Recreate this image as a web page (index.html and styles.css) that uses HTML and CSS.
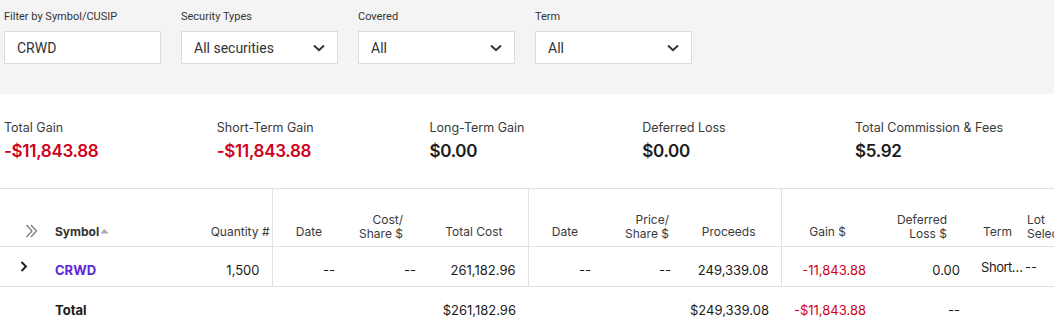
FILE: index.html
```html
<!DOCTYPE html>
<html>
<head>
<meta charset="utf-8">
<link rel="stylesheet" href="styles.css">
</head>
<body>
<div class="filters">
  <div class="filter">
    <div class="flabel">Filter by Symbol/CUSIP</div>
    <div class="fbox">CRWD</div>
  </div>
  <div class="filter">
    <div class="flabel">Security Types</div>
    <div class="fbox select">All securities<svg class="chev" width="12" height="8" viewBox="0 0 12 8"><path d="M1 1.5 L6 6.2 L11 1.5" fill="none" stroke="#333" stroke-width="2"/></svg></div>
  </div>
  <div class="filter">
    <div class="flabel">Covered</div>
    <div class="fbox select">All<svg class="chev" width="12" height="8" viewBox="0 0 12 8"><path d="M1 1.5 L6 6.2 L11 1.5" fill="none" stroke="#333" stroke-width="2"/></svg></div>
  </div>
  <div class="filter">
    <div class="flabel">Term</div>
    <div class="fbox select">All<svg class="chev" width="12" height="8" viewBox="0 0 12 8"><path d="M1 1.5 L6 6.2 L11 1.5" fill="none" stroke="#333" stroke-width="2"/></svg></div>
  </div>
</div>

<div class="summary">
  <div class="stat"><div class="slabel">Total Gain</div><div class="sval neg">-$11,843.88</div></div>
  <div class="stat"><div class="slabel">Short-Term Gain</div><div class="sval neg">-$11,843.88</div></div>
  <div class="stat"><div class="slabel">Long-Term Gain</div><div class="sval">$0.00</div></div>
  <div class="stat"><div class="slabel">Deferred Loss</div><div class="sval">$0.00</div></div>
  <div class="stat"><div class="slabel">Total Commission &amp; Fees</div><div class="sval">$5.92</div></div>
</div>

<div class="tablewrap">
<table class="gl">
  <colgroup>
    <col class="w-exp"><col class="w-sym"><col class="w-qty"><col class="w-date"><col class="w-cps"><col class="w-tc"><col class="w-date"><col class="w-pps"><col class="w-proc"><col class="w-gain"><col class="w-def"><col class="w-term"><col class="w-lot">
  </colgroup>
  <thead>
    <tr>
      <th class="exp"><svg width="13" height="14" viewBox="0 0 13 14"><path d="M1.5 1 L7 7 L1.5 13 M6 1 L11.5 7 L6 13" fill="none" stroke="#777" stroke-width="1.2"/></svg></th>
      <th class="sym">Symbol<svg class="sort" width="9" height="6" viewBox="0 0 9 6"><path d="M0.5 5.5 L4.5 1 L8.5 5.5 Z" fill="#aaa"/></svg></th>
      <th class="num qty">Quantity #</th>
      <th class="num sep">Date</th>
      <th class="num two">Cost/<br>Share $</th>
      <th class="num">Total Cost</th>
      <th class="num sep">Date</th>
      <th class="num two ctr">Price/<br>Share $</th>
      <th class="num">Proceeds</th>
      <th class="num sep gainh">Gain $</th>
      <th class="num two">Deferred<br>Loss $</th>
      <th class="term">Term</th>
      <th class="lot two">Lot<br>Selection</th>
    </tr>
  </thead>
  <tbody>
    <tr class="row">
      <td class="exp"><svg width="8" height="11" viewBox="0 0 8 11"><path d="M1.5 1 L6 5.5 L1.5 10" fill="none" stroke="#222" stroke-width="2"/></svg></td>
      <td class="sym link">CRWD</td>
      <td class="num">1,500</td>
      <td class="num sep">--</td>
      <td class="num">--</td>
      <td class="num">261,182.96</td>
      <td class="num sep">--</td>
      <td class="num">--</td>
      <td class="num">249,339.08</td>
      <td class="num sep neg">-11,843.88</td>
      <td class="num">0.00</td>
      <td class="term"><span class="clip">Short-Term</span></td>
      <td class="lot">--</td>
    </tr>
    <tr class="total">
      <td class="exp"></td>
      <td class="sym">Total</td>
      <td class="num"></td>
      <td class="num"></td>
      <td class="num"></td>
      <td class="num">$261,182.96</td>
      <td class="num"></td>
      <td class="num"></td>
      <td class="num">$249,339.08</td>
      <td class="num neg">-$11,843.88</td>
      <td class="num">--</td>
      <td class="term"></td>
      <td class="lot"></td>
    </tr>
  </tbody>
</table>
</div>
</body>
</html>
```

FILE: styles.css
```css
* { box-sizing: border-box; }
html, body { margin: 0; padding: 0; background: #fff; }
body {
  font-family: Inter, "Liberation Sans", sans-serif;
  color: #1b1b1b;
  width: 1054px;
  height: 324px;
  overflow: hidden;
}

.filters {
  background: #f4f4f4;
  height: 94px;
  padding: 10px 4px 0;
  display: flex;
  gap: 20px;
  font-family: Roboto, "Liberation Sans", sans-serif;
}
.filter { width: 157px; }
.flabel {
  font-size: 11px;
  line-height: 14px;
  color: #333;
  margin-bottom: 7px;
}
.fbox {
  height: 33px;
  background: #fff;
  border: 1px solid #dcdcdc;
  padding: 0 12px;
  font-size: 14px;
  color: #333;
  display: flex;
  align-items: center;
  justify-content: space-between;
}
.select .chev { display: block; }

.summary {
  display: grid;
  grid-template-columns: repeat(5, 212.75px);
  padding: 26px 4px 0;
  height: 94px;
}
.slabel {
  font-size: 12.5px;
  line-height: 16px;
  color: #3a3a3a;
}
.sval {
  font-size: 17px;
  line-height: 22px;
  font-weight: 600;
  letter-spacing: -0.3px;
  margin-top: 4px;
  color: #1b1b1b;
}
.sval.neg { color: #d0021b; }

.tablewrap {
  width: 1054px;
  overflow: hidden;
}
.gl {
  border-collapse: collapse;
  table-layout: fixed;
  width: 1110px;
  border-top: 1px solid #e2e2e2;
}
.w-exp { width: 45px; }
.w-sym { width: 140px; }
.w-qty { width: 87px; }
.w-date { width: 75px; }
.w-cps { width: 81px; }
.w-tc { width: 100px; }
.w-pps { width: 80px; }
.w-proc { width: 98px; }
.w-gain { width: 97px; }
.w-def { width: 94px; }
.w-term { width: 53px; }
.w-lot { width: 85px; }

.gl th {
  font-size: 12px;
  line-height: 14px;
  font-weight: 400;
  color: #3a3a3a;
  vertical-align: bottom;
  height: 58px;
  padding: 0 25px 7px 0;
  white-space: nowrap;
  border-bottom: 1px solid #e2e2e2;
}
.gl th.two { padding-bottom: 5px; }
.gl th.ctr { text-align: center; padding-right: 14px; }
.gl th.qty { padding-right: 2px; overflow: visible; }
.gl th.gainh { padding-right: 32px; }
.gl th.exp { text-align: left; padding: 0 0 8px 25px; }
.gl th.exp svg { display: block; }
.gl th.sym {
  text-align: left;
  padding-left: 10px;
  font-weight: 700;
  color: #333;
}
.sort { margin-left: 1px; vertical-align: 2px; }
.gl th.num { text-align: right; }
.gl th.term { text-align: left; padding: 0 0 7px 11px; }
.gl th.lot { text-align: left; padding: 0 0 5px 2px; }

.gl td {
  font-size: 13px;
  line-height: 16px;
  padding: 0 12px 0 0;
  white-space: nowrap;
}
.gl .sep { border-left: 1px solid #e2e2e2; }
.gl td.num { text-align: right; }
.gl td.exp { padding: 0 0 0 20px; }
.gl td.exp svg { display: block; }
.gl td.sym { padding-left: 10px; }
.gl td.term { padding: 0 0 0 9px; }
.gl td.lot { padding: 0 0 0 0; }
.clip {
  display: block;
  overflow: hidden;
  text-overflow: ellipsis;
  white-space: nowrap;
  letter-spacing: -0.45px;
}

.row td {
  height: 40px;
  border-bottom: 1px solid #e2e2e2;
  padding-top: 6px;
  color: #1b1b1b;
}
.row td.link { color: #5b26d9; font-weight: 700; }
.row td.neg { color: #d0021b; }

.total td {
  height: 44px;
  padding-top: 3px;
  color: #1b1b1b;
  font-weight: 400;
}
.total td.sym { font-weight: 700; }
.total td.neg { color: #d0021b; }
```
